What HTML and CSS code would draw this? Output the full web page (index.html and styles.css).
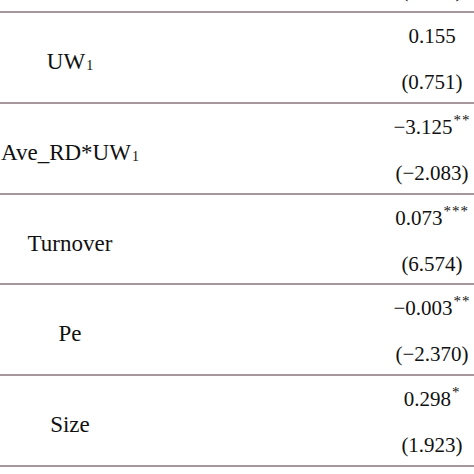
FILE: index.html
```html
<!DOCTYPE html>
<html>
<head>
<meta charset="utf-8">
<link rel="stylesheet" href="styles.css">
</head>
<body>
<div class="table">
  <div class="row partial">
    <div class="label"></div>
    <div class="spacer"></div>
    <div class="num"><span class="ghost">0.000</span><span>(0.000)</span></div>
  </div>
  <div class="row">
    <div class="label">UW<sub>1</sub></div>
    <div class="spacer"></div>
    <div class="num"><span>0.155</span><span>(0.751)</span></div>
  </div>
  <div class="row">
    <div class="label">Ave_RD*UW<sub>1</sub></div>
    <div class="spacer"></div>
    <div class="num"><span>−3.125<sup>**</sup></span><span>(−2.083)</span></div>
  </div>
  <div class="row">
    <div class="label">Turnover</div>
    <div class="spacer"></div>
    <div class="num"><span>0.073<sup>***</sup></span><span>(6.574)</span></div>
  </div>
  <div class="row">
    <div class="label">Pe</div>
    <div class="spacer"></div>
    <div class="num"><span>−0.003<sup>**</sup></span><span>(−2.370)</span></div>
  </div>
  <div class="row">
    <div class="label">Size</div>
    <div class="spacer"></div>
    <div class="num"><span>0.298<sup>*</sup></span><span>(1.923)</span></div>
  </div>
</div>
</body>
</html>
```

FILE: styles.css
```css
body {
  margin: 0;
  background: #ffffff;
  overflow: hidden;
  font-family: "Times New Roman", "Liberation Serif", serif;
  color: #111111;
}

.table {
  display: flex;
  flex-direction: column;
  margin-top: -77.8px;
}

.row {
  display: grid;
  grid-template-columns: 140px 1fr 84px;
  height: 88.8px;
  border-bottom: 2px solid #a5979b;
}

.partial .num {
  margin-top: -1px;
}

.label {
  display: flex;
  align-items: center;
  justify-content: center;
  padding-top: 6px;
  font-family: "Times New Roman", "Liberation Serif", serif;
  font-size: 23px;
  white-space: nowrap;
}

.label sub {
  font-size: 14px;
  position: relative;
  top: 4px;
  vertical-align: baseline;
  line-height: 0;
  margin-left: 1px;
}

.num {
  display: flex;
  flex-direction: column;
  align-items: center;
  font-family: "Times New Roman", "Liberation Serif", serif;
  font-size: 21px;
  line-height: 46px;
  white-space: nowrap;
}

.ghost {
  visibility: hidden;
}

.num sup {
  font-size: 15px;
  position: relative;
  top: -9px;
  vertical-align: baseline;
  line-height: 0;
  letter-spacing: 1px;
  margin-left: 1px;
}
```
